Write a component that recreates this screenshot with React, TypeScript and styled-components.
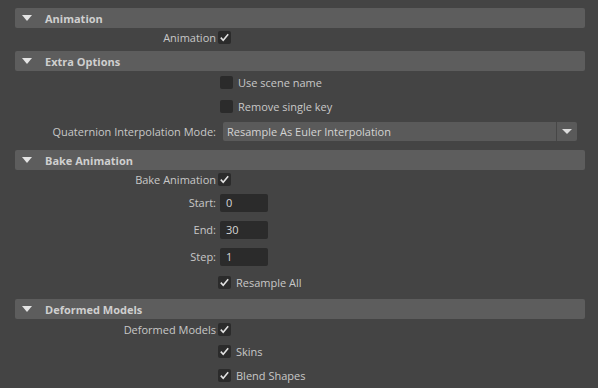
import React from "react";
import styled, { createGlobalStyle } from "styled-components";

const GlobalStyle = createGlobalStyle`
  html, body {
    margin: 0;
    padding: 0;
    background: #444444;
  }
  body {
    font-family: "Open Sans", "Noto Sans", "Liberation Sans", sans-serif;
    font-size: 11px;
    color: #c8c8c8;
  }
`;

const Page = styled.div`
  width: 598px;
  height: 388px;
  box-sizing: border-box;
  padding: 8px 13px 0 15px;
  background: #444444;
  overflow: hidden;
`;

const Header = styled.div`
  height: 20px;
  display: flex;
  align-items: center;
  background: #5d5d5d;
  border-radius: 2px;
  padding-left: 7px;
  font-weight: 700;
  color: #cfcfcf;
`;

const Arrow = styled.span`
  width: 0;
  height: 0;
  border-left: 5px solid transparent;
  border-right: 5px solid transparent;
  border-top: 6px solid #e4e4e4;
  margin-right: 13px;
`;

const Content = styled.div<{ $top: number; $bottom: number }>`
  padding-top: ${(p) => p.$top}px;
  padding-bottom: ${(p) => p.$bottom}px;
`;

const Row = styled.div<{ $h: number }>`
  height: ${(p) => p.$h}px;
  display: grid;
  grid-template-columns: 201px 1fr;
  column-gap: 2px;
  align-items: center;
`;

const Label = styled.div`
  text-align: right;
  white-space: nowrap;
`;

const Control = styled.div<{ $indent?: number }>`
  display: flex;
  align-items: center;
  gap: 5px;
  min-width: 0;
  padding-left: ${(p) => p.$indent ?? 0}px;
`;

const Box = styled.div`
  width: 13px;
  height: 13px;
  border-radius: 2px;
  background: #2b2b2b;
  display: flex;
  align-items: center;
  justify-content: center;
  flex-shrink: 0;
`;

const Field = styled.div`
  width: 48px;
  height: 18px;
  box-sizing: border-box;
  border-radius: 2px;
  background: #2b2b2b;
  padding-left: 6px;
  line-height: 18px;
  color: #d8d8d8;
`;

const Select = styled.div`
  flex: 1;
  margin: 0 8px 0 3px;
  height: 19px;
  display: flex;
  background: #5a5a5a;
  border-radius: 2px;
  overflow: hidden;
`;

const SelectText = styled.div`
  flex: 1;
  padding-left: 4px;
  line-height: 19px;
  color: #d4d4d4;
  border-right: 1px solid #474747;
`;

const SelectArrow = styled.div`
  width: 20px;
  display: flex;
  align-items: center;
  justify-content: center;
  &::after {
    content: "";
    border-left: 5px solid transparent;
    border-right: 5px solid transparent;
    border-top: 5px solid #dcdcdc;
  }
`;

const Check: React.FC<{ on?: boolean }> = ({ on }) => (
  <Box>
    {on && (
      <svg width="11" height="11" viewBox="0 0 11 11">
        <polyline
          points="1.8,5.6 4.2,8.2 9.2,2.2"
          fill="none"
          stroke="#e2e2e2"
          strokeWidth="1.6"
        />
      </svg>
    )}
  </Box>
);

const Section: React.FC<{ title: string; children: React.ReactNode; top: number; bottom: number }> = ({
  title,
  children,
  top,
  bottom,
}) => (
  <>
    <Header>
      <Arrow />
      {title}
    </Header>
    <Content $top={top} $bottom={bottom}>
      {children}
    </Content>
  </>
);

const App: React.FC = () => {
  return (
    <Page>
      <GlobalStyle />
      <Section title="Animation" top={1} bottom={6}>
        <Row $h={16}>
          <Label>Animation</Label>
          <Control $indent={-1}>
            <Check on />
          </Control>
        </Row>
      </Section>
      <Section title="Extra Options" top={0} bottom={6}>
        <Row $h={23}>
          <div />
          <Control $indent={2}>
            <Check />
            Use scene name
          </Control>
        </Row>
        <Row $h={24}>
          <div />
          <Control $indent={2}>
            <Check />
            Remove single key
          </Control>
        </Row>
        <Row $h={26}>
          <Label>Quaternion Interpolation Mode:</Label>
          <Control $indent={2}>
            <Select>
              <SelectText>Resample As Euler Interpolation</SelectText>
              <SelectArrow />
            </Select>
          </Control>
        </Row>
      </Section>
      <Section title="Bake Animation" top={0} bottom={5}>
        <Row $h={19}>
          <Label>Bake Animation</Label>
          <Control>
            <Check on />
          </Control>
        </Row>
        <Row $h={27}>
          <Label>Start:</Label>
          <Control $indent={2}>
            <Field>0</Field>
          </Control>
        </Row>
        <Row $h={27}>
          <Label>End:</Label>
          <Control $indent={2}>
            <Field>30</Field>
          </Control>
        </Row>
        <Row $h={27}>
          <Label>Step:</Label>
          <Control $indent={2}>
            <Field>1</Field>
          </Control>
        </Row>
        <Row $h={24}>
          <div />
          <Control>
            <Check on />
            Resample All
          </Control>
        </Row>
      </Section>
      <Section title="Deformed Models" top={0} bottom={0}>
        <Row $h={20}>
          <Label>Deformed Models</Label>
          <Control>
            <Check on />
          </Control>
        </Row>
        <Row $h={24}>
          <div />
          <Control>
            <Check on />
            Skins
          </Control>
        </Row>
        <Row $h={24}>
          <div />
          <Control>
            <Check on />
            Blend Shapes
          </Control>
        </Row>
      </Section>
    </Page>
  );
};

export default App;
